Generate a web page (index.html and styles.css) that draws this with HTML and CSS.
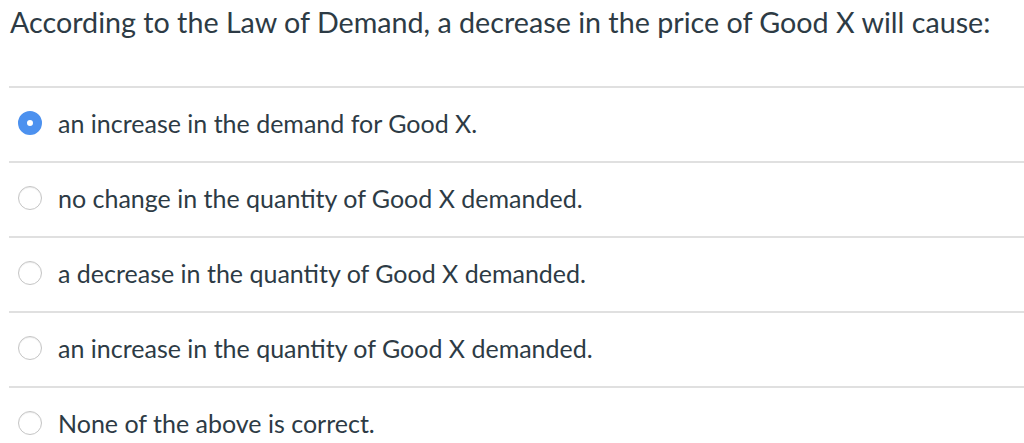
FILE: index.html
```html
<!DOCTYPE html>
<html>
<head>
<meta charset="utf-8">
<link rel="stylesheet" href="styles.css">
</head>
<body>
<div class="quiz">
  <div class="question">According to the Law of Demand, a decrease in the price of Good X will cause:</div>
  <div class="answers">
    <label class="answer"><span class="radio checked"></span><span class="label">an increase in the demand for Good X.</span></label>
    <label class="answer"><span class="radio"></span><span class="label">no change in the quantity of Good X demanded.</span></label>
    <label class="answer"><span class="radio"></span><span class="label">a decrease in the quantity of Good X demanded.</span></label>
    <label class="answer"><span class="radio"></span><span class="label">an increase in the quantity of Good X demanded.</span></label>
    <label class="answer"><span class="radio"></span><span class="label">None of the above is correct.</span></label>
  </div>
</div>
</body>
</html>
```

FILE: styles.css
```css
html, body {
  margin: 0;
  padding: 0;
  background: #ffffff;
}
body {
  font-family: Lato, "Liberation Sans", sans-serif;
  color: #2d3b45;
  overflow: hidden;
}
.quiz {
  padding-left: 9px;
}
.question {
  font-size: 28.7px;
  line-height: 34px;
  padding-top: 5px;
  padding-left: 1px;
  height: 86px;
  box-sizing: border-box;
}
.answers {
  display: flex;
  flex-direction: column;
}
.answer {
  display: flex;
  align-items: center;
  height: 75px;
  border-top: 2px solid #e0e0e0;
  box-sizing: border-box;
  gap: 16px;
  padding-left: 9px;
  padding-bottom: 3px;
  font-size: 25px;
}
.label {
  position: relative;
  top: 0;
}
.radio {
  width: 24px;
  height: 24px;
  border-radius: 50%;
  border: 1px solid #c5c5c5;
  box-sizing: border-box;
  background: #fff;
  flex: none;
  box-shadow: inset 0 1px 1px rgba(0,0,0,0.08);
}
.radio.checked {
  border: 9px solid #4c91ef;
  background: #fff;
  box-shadow: none;
}
```
